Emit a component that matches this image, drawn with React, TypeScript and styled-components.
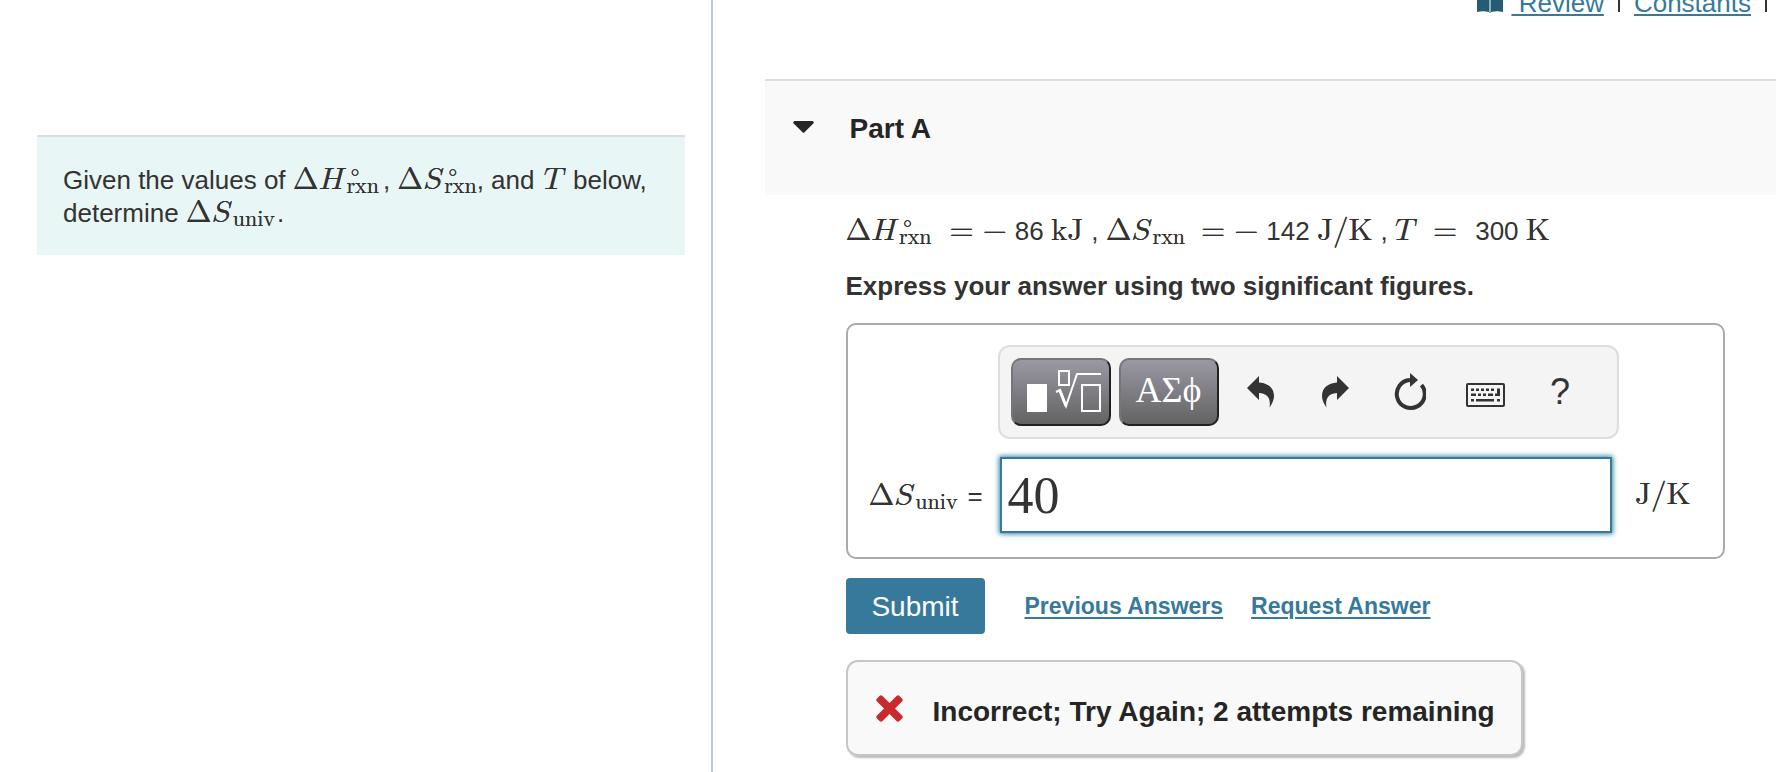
import React, { useState } from 'react';
import styled, { createGlobalStyle } from 'styled-components';

const GlobalStyle = createGlobalStyle`
  *, *::before, *::after { box-sizing: border-box; }
  body {
    margin: 0;
    background: #fff;
    color: #333;
    font: 26px/33px "Liberation Sans", Arial, sans-serif;
  }
`;

const MATH_FONT = '"Latin Modern Math", "Liberation Serif", serif';
const LINK = '#36799b';

/* ---------- page frame ---------- */

const Page = styled.div`
  display: grid;
  grid-template-columns: minmax(0, 67fr) minmax(0, 100fr);
  min-height: 100vh;
`;

const Aside = styled.aside`
  border-right: 2px solid #bdccdc;
  padding: 135px 26px 0 37px;
`;

const Main = styled.main`
  padding-left: 52px;
`;

const Prompt = styled.p`
  margin: 0;
  padding: 27px 26px 25px;
  border-top: 2px solid #ddd;
  background: #e8f6f6;
`;

/* ---------- formulas ---------- */

/* The unblurred shadow gives the thin strokes of the math face more weight. */
const MathText = styled.span`
  font-family: ${MATH_FONT};
  font-size: 31px;
  line-height: 0;
  text-shadow: 0 0 0 #333;
  white-space: nowrap;
`;

const Sub = styled.span`
  padding-left: 2px;
  font-size: 22px;
  vertical-align: -4px;
`;

/* The degree mark stands above the subscript and takes no width of its own. */
const Degree = styled.span`
  display: inline-block;
  width: 0;
  font-size: 22px;
  text-indent: 6px;
  vertical-align: 11px;
`;

const Gap = styled.span<{ $w: number }>`
  display: inline-block;
  width: ${(p) => p.$w}px;
`;

function Delta({ of, sub, standard }: { of: string; sub: string; standard?: boolean }) {
  return (
    <MathText>
      Δ{of}
      {standard && <Degree>∘</Degree>}
      <Sub>{sub}</Sub>
    </MathText>
  );
}

/* ---------- resource links ---------- */

const Resources = styled.nav`
  display: flex;
  justify-content: flex-end;
  align-items: flex-end;
  height: 18px;
  margin-bottom: 61px;
  padding-right: 8px;
  overflow: hidden;
  line-height: 30px;
`;

const ResourceLink = styled.a`
  color: ${LINK};
  text-decoration: underline;
  text-decoration-thickness: 2px;
  text-underline-offset: 2px;
  white-space: pre;
`;

const Separator = styled.span`
  width: 2px;
  height: 24px;
  margin: 0 14px 6px;
  background: #333;

  &:last-child {
    margin-right: 1px;
  }
`;

const BookIcon = styled.svg`
  width: 26px;
  height: 24px;
  margin: 0 8px 5px 0;
`;

/* ---------- part header and question ---------- */

const PartHeader = styled.header`
  display: flex;
  align-items: flex-start;
  height: 116px;
  padding: 32px 28px;
  border-top: 2px solid #ddd;
  background: #f9f9f9;
  color: #252525;
`;

const Toggle = styled.button`
  display: flex;
  margin: 8px 36px 0 0;
  padding: 0;
  border: 0;
  background: none;
`;

const PartTitle = styled.h2`
  margin: 0;
  font-size: 28px;
  line-height: 32px;
`;

const Body = styled.section`
  padding: 20px 51px 0 81px;
`;

const Given = styled.p`
  margin: 0;
  white-space: nowrap;
`;

const Instruction = styled.p`
  margin: 22px 0 0;
  font-weight: bold;
`;

/* ---------- answer box ---------- */

const AnswerBox = styled.form`
  display: grid;
  grid-template-columns: 150px minmax(0, 1fr) 104px;
  row-gap: 18px;
  align-items: center;
  margin-top: 20px;
  padding: 20px 0 24px;
  border: 2px solid #aaa;
  border-radius: 10px;
`;

const Toolbar = styled.div`
  grid-column: 2;
  display: flex;
  align-items: center;
  height: 94px;
  padding: 0 11px;
  border: 2px solid #ddd;
  border-radius: 12px;
  background: #f4f4f4;
`;

const PaletteButton = styled.button`
  display: flex;
  align-items: center;
  justify-content: center;
  width: 100px;
  height: 68px;
  padding: 0 0 4px;
  border: 2px solid;
  border-color: #767676 #212121 #212121 #767676;
  border-radius: 10px;
  background: linear-gradient(#9a98a3, #636363);
  color: #fff;
  font: 36px "Liberation Serif", serif;

  & + & {
    margin-left: 8px;
  }
`;

const ToolButton = styled.button`
  display: flex;
  align-items: center;
  justify-content: center;
  width: 75px;
  height: 68px;
  padding: 0;
  border: 0;
  background: none;
  color: #333;
  font: 36px "Liberation Sans", sans-serif;

  ${PaletteButton} + & {
    margin-left: 4px;
  }
`;

const AnswerLabel = styled.label`
  grid-column: 1;
  padding: 2px 0 0 21px;
  white-space: nowrap;
`;

const AnswerInput = styled.input`
  min-width: 0;
  height: 76px;
  margin: 0 7px 0 2px;
  padding: 0 6px;
  border: 2px solid ${LINK};
  outline: none;
  background: #fff;
  box-shadow: 0 0 5px 1px #2f86a0;
  color: #333;
  font: 52px "Liberation Serif", serif;
`;

const Unit = styled.span`
  padding-left: 16px;
`;

/* ---------- actions and feedback ---------- */

const Actions = styled.div`
  display: flex;
  align-items: center;
  margin-top: 19px;
`;

const Submit = styled.button`
  width: 139px;
  height: 56px;
  margin-right: 40px;
  padding: 2px 0 0;
  border: 0;
  border-radius: 4px;
  background: ${LINK};
  color: #fff;
  font: 28px "Liberation Sans", Arial, sans-serif;
`;

const ActionLink = styled.a`
  margin-right: 28px;
  color: ${LINK};
  font-size: 23px;
  font-weight: bold;
  text-decoration-thickness: 2px;
  text-underline-offset: 3px;
`;

const Feedback = styled.div`
  display: flex;
  align-items: center;
  width: fit-content;
  height: 96px;
  margin-top: 26px;
  padding: 0 26px 0 28px;
  border: 2px solid #c5c7c6;
  border-radius: 12px;
  background: #f9f9f9;
  box-shadow: 2px 2px 2px #bbb;
  color: #252525;
  font-size: 28px;
  font-weight: bold;
`;

const CrossIcon = styled.svg`
  width: 27px;
  height: 27px;
  margin-right: 30px;
`;

const FeedbackText = styled.span`
  padding-top: 6px;
`;

/* ---------- drawings ---------- */

const UndoShape = () => (
  <path d="M0 12 12 0v6.500C21 7 27 12 27 20c0 4-2 8-4.500 11.500C24 23 21 17.500 12 17v7z" fill="#333" />
);

function TemplateIcon() {
  return (
    <svg width="82" height="48" viewBox="-6 -4 82 48" fill="none" stroke="#fff" strokeWidth="2">
      <path d="M1 14h20v28H1z" fill="#fff" stroke="none" />
      <path d="M33 1h10v14H33zM56 15h18v26H56z" />
      <path d="M30 22l4-2 6 16L51 4h24" />
      <path d="M34 21l6 15" strokeWidth="3" />
    </svg>
  );
}

function KeyboardIcon() {
  return (
    <svg width="39" height="30" viewBox="0 -6 39 30" fill="#333">
      <rect x="1" y="1" width="37" height="22" rx="1" fill="none" stroke="#333" strokeWidth="2" />
      <path d="M5 5.500h3v2.500H5zM10 5.500h3v2.500h-3zM15 5.500h3v2.500h-3zM20 5.500h3v2.500h-3zM25 5.500h3v2.500h-3zM31 5.500h3V13h-5v-2.500h2z" />
      <path d="M5 10.500h5V13H5zM12 10.500h3V13h-3zM17 10.500h3V13h-3zM22 10.500h5V13h-5zM5 16h3v2.500H5zM10 16h18v2.500H10zM31 16h3v2.500h-3z" />
    </svg>
  );
}

export default function App() {
  const [answer, setAnswer] = useState('40');

  return (
    <Page>
      <GlobalStyle />
      <Aside>
        <Prompt>
          Given the values of <Delta of="𝐻" sub="rxn" standard />
          <Gap $w={4} />, <Delta of="𝑆" sub="rxn" standard />, and <Gap $w={2} />
          <MathText>𝑇</MathText>
          <Gap $w={4} /> below,
          <br />
          determine <Delta of="𝑆" sub="univ" />
          <Gap $w={2} />.
        </Prompt>
      </Aside>

      <Main>
        <Resources aria-label="Resources">
          <BookIcon viewBox="0 0 26 24" aria-hidden="true">
            <path d="M0 0h12v23c-4-1-8-1-12 0zM14 0h12v23c-4-1-8-1-12 0z" fill="#265c73" />
            <path d="M12 0h2v24h-2z" fill="#8fb0bd" />
          </BookIcon>
          <ResourceLink href="#review"> Review</ResourceLink>
          <Separator />
          <ResourceLink href="#constants">Constants</ResourceLink>
          <Separator />
        </Resources>

        <PartHeader>
          <Toggle type="button" aria-label="Collapse Part A">
            <svg width="21" height="12" viewBox="0 0 21 12">
              <path d="M1.500 0h18q2 1 .8 2.500L11.500 11.300q-1 1-2 0L.7 2.500Q-.5 1 1.500 0z" fill="#252525" />
            </svg>
          </Toggle>
          <PartTitle>Part A</PartTitle>
        </PartHeader>

        <Body>
          <Given>
            <Delta of="𝐻" sub="rxn" standard />
            <Gap $w={18} />
            <MathText>=</MathText>
            <Gap $w={9} />
            <MathText>−</MathText>
            <Gap $w={8} />
            86 <MathText>kJ</MathText>
            <Gap $w={8} />, <Delta of="𝑆" sub="rxn" />
            <Gap $w={16} />
            <MathText>=</MathText>
            <Gap $w={9} />
            <MathText>−</MathText>
            <Gap $w={8} />
            142 <MathText>J/K</MathText>
            <Gap $w={8} />, <MathText>𝑇</MathText>
            <Gap $w={20} />
            <MathText>=</MathText>
            <Gap $w={18} />
            300 <MathText>K</MathText>
          </Given>
          <Instruction>Express your answer using two significant figures.</Instruction>

          <AnswerBox onSubmit={(e) => e.preventDefault()} id="answer-form">
            <Toolbar role="toolbar" aria-label="Equation editor">
              <PaletteButton type="button" aria-label="Templates">
                <TemplateIcon />
              </PaletteButton>
              <PaletteButton type="button">ΑΣϕ</PaletteButton>
              <ToolButton type="button" aria-label="Undo">
                <svg width="27" height="32" viewBox="0 0 27 32">
                  <UndoShape />
                </svg>
              </ToolButton>
              <ToolButton type="button" aria-label="Redo">
                <svg width="27" height="32" viewBox="0 0 27 32">
                  <g transform="matrix(-1 0 0 1 27 0)">
                    <UndoShape />
                  </g>
                </svg>
              </ToolButton>
              <ToolButton type="button" aria-label="Reset">
                <svg width="32" height="38" viewBox="0 0 32 38">
                  <path d="M27.500 12A14 14 0 1 1 16 7" fill="none" stroke="#333" strokeWidth="4" />
                  <path d="M16 0v14l8-7z" fill="#333" />
                </svg>
              </ToolButton>
              <ToolButton type="button" aria-label="Keyboard shortcuts">
                <KeyboardIcon />
              </ToolButton>
              <ToolButton type="button" aria-label="Help">?</ToolButton>
            </Toolbar>

            <AnswerLabel htmlFor="answer">
              <Delta of="𝑆" sub="univ" />
              <Gap $w={10} />=
            </AnswerLabel>
            <AnswerInput id="answer" value={answer} onChange={(e) => setAnswer(e.target.value)} />
            <Unit>
              <MathText>J/K</MathText>
            </Unit>
          </AnswerBox>

          <Actions>
            <Submit type="submit" form="answer-form">
              Submit
            </Submit>
            <ActionLink href="#previous">Previous Answers</ActionLink>
            <ActionLink href="#request">Request Answer</ActionLink>
          </Actions>

          <Feedback role="status">
            <CrossIcon viewBox="0 0 27 27" aria-hidden="true">
              <path
                d="M3.500 1Q5-.5 6.500 1l7 7 7-7Q22-.5 23.500 1L26 3.500Q27.500 5 26 6.500l-7 7 7 7q1.500 1.500 0 3L23.500 26q-1.500 1.500-3 0l-7-7-7 7q-1.500 1.500-3 0L1 23.500q-1.500-1.500 0-3l7-7-7-7Q-.5 5 1 3.500z"
                fill="#ca2a2c"
              />
            </CrossIcon>
            <FeedbackText>Incorrect; Try Again; 2 attempts remaining</FeedbackText>
          </Feedback>
        </Body>
      </Main>
    </Page>
  );
}
